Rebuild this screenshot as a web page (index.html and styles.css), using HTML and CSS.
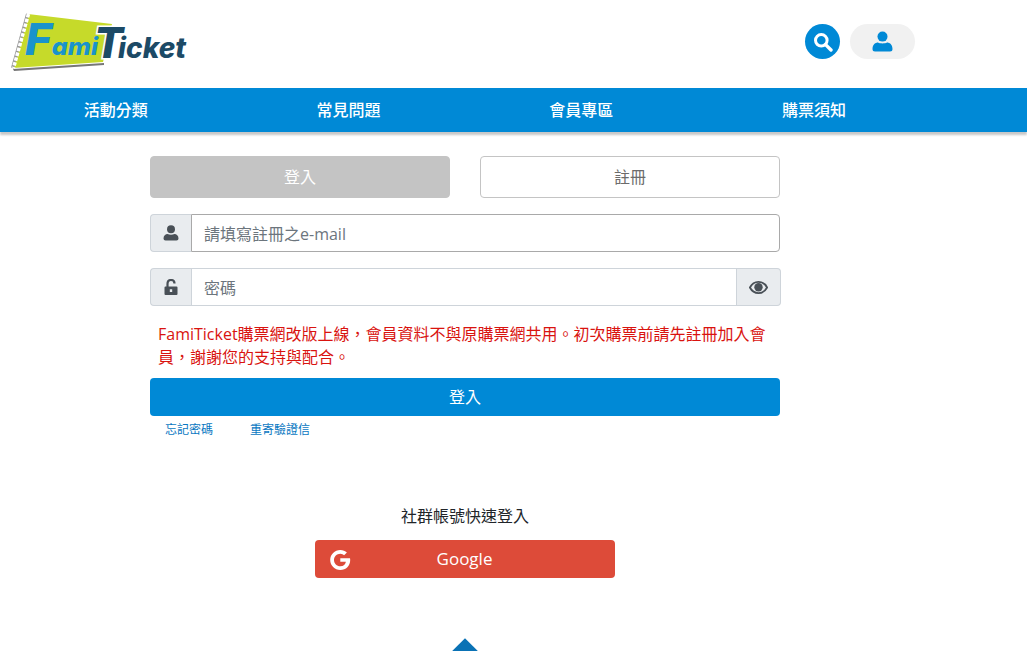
FILE: index.html
```html
<!DOCTYPE html>
<html lang="zh-Hant">
<head>
<meta charset="utf-8">
<title>FamiTicket</title>
<link rel="stylesheet" href="styles.css">
</head>
<body>
<header class="top">
  <a class="logo" href="#">
    <svg width="180" height="62" viewBox="0 0 180 62">
      <path d="M3 58 L94 52 L94 54 L4 60 Z" fill="#777"/>
      <path d="M18 3 L102 13 L93 51 L3 57 Z" fill="#c6da2a"/>
      <path d="M17.500 3 L2.500 57" fill="none" stroke="#999" stroke-width="3"/>
      <path d="M18.500 3 L3.500 57" fill="none" stroke="#fff" stroke-width="3.500" stroke-dasharray="3.500 1.500"/>
      <text class="logo-fami" x="15" y="44" textLength="73" lengthAdjust="spacingAndGlyphs">F<tspan class="logo-small">ami</tspan></text>
      <text class="logo-ticket" x="84" y="47"><tspan class="logo-big">T</tspan><tspan dx="-5">icket</tspan></text>
    </svg>
  </a>
  <div class="top-actions">
    <a class="search-btn" href="#">
      <svg width="20" height="20" viewBox="0 0 20 20"><circle cx="8.300" cy="8.300" r="5.800" fill="none" stroke="#fff" stroke-width="3"/><path d="M12.600 12.600 L18 18" stroke="#fff" stroke-width="3.400" stroke-linecap="round"/></svg>
    </a>
    <a class="user-btn" href="#">
      <svg width="21" height="21" viewBox="0 0 21 21"><circle cx="10.500" cy="5.600" r="5" fill="#0089d6"/><path d="M0.500 18 C0.500 13.500 3.500 11.500 6 11.500 C8 12.700 13 12.700 15 11.500 C17.500 11.500 20.500 13.500 20.500 18 Q20.500 20.500 18 20.500 H3 Q0.500 20.500 0.500 18 Z" fill="#0089d6"/></svg>
    </a>
  </div>
</header>
<nav class="nav">
  <a href="#">活動分類</a>
  <a href="#">常見問題</a>
  <a href="#">會員專區</a>
  <a href="#">購票須知</a>
</nav>
<main class="panel">
  <div class="tabs">
    <a class="tab tab-on" href="#">登入</a>
    <a class="tab" href="#">註冊</a>
  </div>
  <div class="field">
    <span class="addon addon-left">
      <svg width="16" height="16" viewBox="0 0 16 16"><circle cx="8" cy="4.200" r="4" fill="#495057"/><path d="M0.500 13.500 C0.500 10.500 2.500 9 4.500 9 C6.500 10 9.500 10 11.500 9 C13.500 9 15.500 10.500 15.500 13.500 Q15.500 15.500 13.500 15.500 H2.500 Q0.500 15.500 0.500 13.500 Z" fill="#495057"/></svg>
    </span>
    <input class="input input-active" type="text" placeholder="請填寫註冊之e-mail">
  </div>
  <div class="field">
    <span class="addon addon-left">
      <svg width="16" height="17" viewBox="0 0 16 17"><path d="M4.500 8 V5 C4.500 2.400 6 1 8 1 C10 1 11.500 2.400 11.500 4.500" fill="none" stroke="#495057" stroke-width="2.200"/><path d="M2.500 7.500 H13.500 Q14.500 7.500 14.500 8.500 V15 Q14.500 16 13.500 16 H2.500 Q1.500 16 1.500 15 V8.500 Q1.500 7.500 2.500 7.500 Z M6.800 10.200 V13 H9.200 V10.200 Z" fill="#495057" fill-rule="evenodd"/></svg>
    </span>
    <input class="input input-mid" type="password" placeholder="密碼">
    <span class="addon addon-right">
      <svg width="19" height="13" viewBox="0 0 19 13"><path d="M0.900 6.500 C3 2.500 6 0.900 9.500 0.900 C13 0.900 16 2.500 18.100 6.500 C16 10.500 13 12.100 9.500 12.100 C6 12.100 3 10.500 0.900 6.500 Z" fill="none" stroke="#495057" stroke-width="1.800"/><circle cx="9.500" cy="6.300" r="4.200" fill="#495057"/></svg>
    </span>
  </div>
  <p class="notice">FamiTicket購票網改版上線，會員資料不與原購票網共用。初次購票前請先註冊加入會員，謝謝您的支持與配合。</p>
  <button class="submit" type="button">登入</button>
  <div class="links">
    <a href="#">忘記密碼</a>
    <a href="#">重寄驗證信</a>
  </div>
  <section class="social">
    <p class="social-title">社群帳號快速登入</p>
    <a class="google" href="#">
      <svg class="google-icon" width="21" height="20" viewBox="0 0 21 20"><path d="M10.300 0 C13 0 15.200 1 16.900 2.600 L14.100 5.300 C13.300 4.500 12 3.700 10.300 3.700 C6.800 3.700 4 6.500 4 10 C4 13.500 6.800 16.300 10.300 16.300 C13.600 16.300 15.500 14.300 15.900 11.700 H10.300 V8.200 H20 C20.100 8.800 20.200 9.300 20.200 10 C20.200 16 16 20 10.300 20 C4.700 20 0.200 15.500 0.200 10 C0.200 4.500 4.700 0 10.300 0 Z" fill="#fff"/></svg>
      <span class="google-label">Google</span>
    </a>
  </section>
  <div class="to-top"></div>
</main>
</body>
</html>
```
FILE: styles.css
```css
* { box-sizing: border-box; }
html, body { height: 100%; }
body {
  margin: 0;
  height: 651px;
  overflow: hidden;
  background: #fff;
  color: #212529;
  font-family: "Open Sans", "Noto Sans CJK TC", sans-serif;
  font-size: 16px;
}
a { text-decoration: none; color: inherit; }
p { margin: 0; }

.top {
  height: 88px;
  display: flex;
  align-items: flex-start;
  padding: 11px 112px 0 10px;
  justify-content: space-between;
}
.logo { display: block; height: 62px; }
.logo svg { display: block; }
.logo-fami, .logo-ticket {
  font-family: Inter, "Liberation Sans", sans-serif;
  font-weight: 800;
  font-style: italic;
}
.logo-fami { font-size: 44px; fill: #1a93cc; }
.logo-small { font-size: 24px; }
.logo-ticket {
  font-size: 28px;
  fill: #1c4a66;
  stroke: #fff;
  stroke-width: 3px;
  paint-order: stroke;
}
.logo-big { font-size: 43px; }
.top-actions {
  display: flex;
  align-items: center;
  gap: 10px;
  margin-top: 13px;
}
.search-btn {
  width: 35px;
  height: 35px;
  border-radius: 50%;
  background: #0089d6;
  display: flex;
  align-items: center;
  justify-content: center;
}
.user-btn {
  width: 65px;
  height: 35px;
  border-radius: 18px;
  background: #f1f1f1;
  display: flex;
  align-items: center;
  justify-content: center;
}

.nav {
  height: 44px;
  background: #0089d6;
  box-shadow: 0 3px 2px #c8c8c8;
  display: flex;
}
.nav a {
  width: 232.750px;
  padding-right: 1px;
  text-align: center;
  color: #fff;
  font-weight: 500;
  font-size: 16px;
  line-height: 44px;
}

.panel {
  width: 630px;
  margin-left: 150px;
  padding-top: 24px;
  position: relative;
}
.tabs { display: flex; justify-content: space-between; }
.tab {
  width: 300px;
  height: 42px;
  line-height: 40px;
  text-align: center;
  border: 1px solid #c4c4c4;
  border-radius: 4px;
  color: #6b6b6b;
  font-size: 16px;
}
.tab-on { background: #c4c4c4; color: #fff; }

.field {
  display: flex;
  height: 38px;
  margin-top: 16px;
}
.addon {
  flex: none;
  background: #e9ecef;
  border: 1px solid #ced4da;
  display: flex;
  align-items: center;
  justify-content: center;
}
.addon-left { border-right: 0; border-radius: 4px 0 0 4px; width: 41px; }
.addon-right { border-left: 0; border-radius: 0 4px 4px 0; width: 44px; margin-right: -1px; }
.input {
  flex: 1;
  min-width: 0;
  height: 38px;
  padding: 2px 12px 0;
  background: #fff;
  border: 1px solid #ced4da;
  border-radius: 0 4px 4px 0;
  font: inherit;
  color: #495057;
  outline: none;
}
.input-active { border-color: #a9a9a9; }
.input-mid { border-radius: 0; }
.input::placeholder { color: #6c757d; opacity: 1; }

.notice {
  margin-top: 17px;
  padding: 0 8px;
  color: #d9130f;
  font-size: 16px;
  line-height: 23px;
}
.submit {
  display: block;
  width: 100%;
  height: 38px;
  margin-top: 9px;
  padding: 0 0 2px;
  border: 0;
  border-radius: 4px;
  background: #0089d6;
  color: #fff;
  font: inherit;
}
.links {
  display: flex;
  gap: 37px;
  padding-left: 15px;
  margin-top: 5px;
  font-size: 12px;
  line-height: 18px;
  color: #0a78c2;
}
.social {
  margin-top: 65px;
  display: flex;
  flex-direction: column;
  align-items: center;
}
.social-title { font-size: 16px; line-height: 24px; color: #212529; }
.google {
  position: relative;
  width: 300px;
  height: 38px;
  margin-top: 12px;
  border-radius: 4px;
  background: #dd4b39;
  color: #fff;
  font-size: 17px;
  display: flex;
  align-items: center;
  justify-content: center;
}
.google-label { margin: -2px 1px 0 0; }
.google-icon { position: absolute; left: 15px; top: 10px; }
.to-top {
  position: absolute;
  left: 301px;
  top: 512px;
  width: 28px;
  height: 28px;
  background: #0a72b5;
  transform: rotate(45deg);
}
```
